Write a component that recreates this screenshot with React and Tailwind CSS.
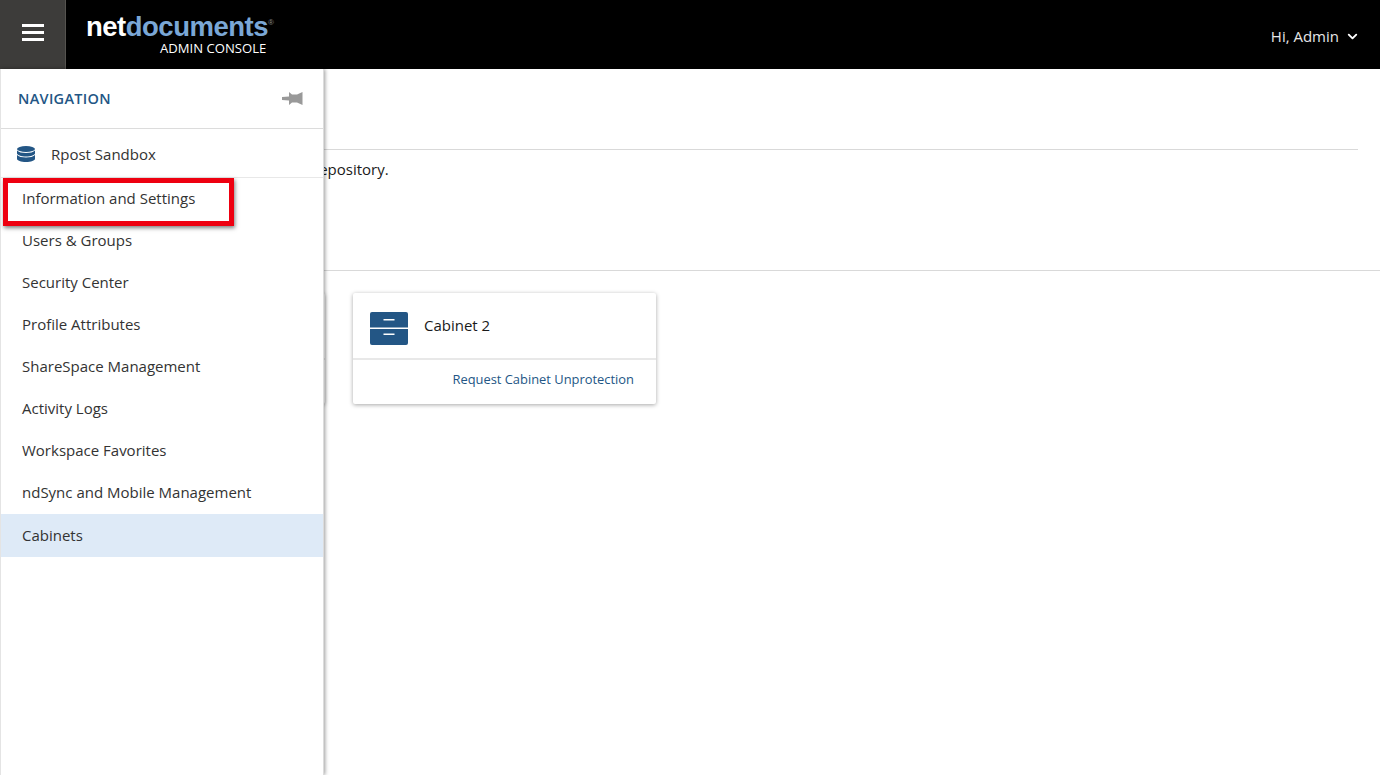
import React from "react";
import { ChevronDown } from "lucide-react";

const NAV_ITEMS = [
  "Information and Settings",
  "Users & Groups",
  "Security Center",
  "Profile Attributes",
  "ShareSpace Management",
  "Activity Logs",
  "Workspace Favorites",
  "ndSync and Mobile Management",
];

function CabinetIcon() {
  return (
    <svg width="38" height="33" viewBox="0 0 38 33" className="shrink-0 mt-[6px]">
      <path d="M2 0h34a2 2 0 0 1 2 2v13.500H0V2a2 2 0 0 1 2-2z" fill="#235685" />
      <path d="M0 17h38v14a2 2 0 0 1-2 2H2a2 2 0 0 1-2-2z" fill="#235685" />
      <rect x="13.500" y="7" width="11" height="1.500" fill="#fff" />
      <rect x="13.500" y="21.500" width="11" height="1.500" fill="#fff" />
    </svg>
  );
}

function DatabaseIcon() {
  return (
    <svg width="18" height="16" viewBox="0 0 18 16" className="shrink-0">
      <ellipse cx="9" cy="3" rx="9" ry="3" fill="#235685" />
      <path d="M0 4.500C1.500 6.200 5 7 9 7s7.500-.8 9-2.500V7.500C18 9 14 10.500 9 10.500S0 9 0 7.500z" fill="#235685" />
      <path d="M0 9C1.500 10.700 5 11.500 9 11.500s7.500-.8 9-2.500v4c0 1.500-4 3-9 3s-9-1.500-9-3z" fill="#235685" />
    </svg>
  );
}

function PinIcon() {
  return (
    <svg width="21" height="15" viewBox="0 0 21 15">
      <path d="M0 6l7-.5V1l3 2.500h5L20.500 1v13L15 11.500h-5L7 14V9.500L0 9z" fill="#999" />
    </svg>
  );
}

function Card({ title, action }) {
  return (
    <div className="w-[303px] h-[111px] bg-white shadow-[0_1px_4px_rgba(0,0,0,0.35)] rounded-[2px] flex flex-col">
      <div className="h-[67px] border-b-2 border-[#e8e8e8] flex items-center pl-[17px] gap-[16px]">
        {title && <CabinetIcon />}
        <span className="text-[15px] text-[#1a1a1a]">{title}</span>
      </div>
      <div className="flex-1 flex items-center justify-end pr-[22px] pb-[4px] text-[12.900px] text-[#235685]">
        {action}
      </div>
    </div>
  );
}

export default function App() {
  return (
    <div className="w-[1380px] h-[775px] overflow-hidden bg-white relative font-['Open_Sans',sans-serif]">
      {/* Header */}
      <header className="h-[69px] bg-black flex items-center">
        <div className="w-[66px] h-full bg-[#3d3c3a] border-r border-[#55534f] flex flex-col items-center justify-center gap-[4px] pb-[4px]">
          <div className="w-[22px] h-[3px] bg-white" />
          <div className="w-[22px] h-[3px] bg-white" />
          <div className="w-[22px] h-[3px] bg-white" />
        </div>
        <div className="ml-[20px] relative w-[190px] h-full">
          <div className="absolute left-0 top-[13px] flex items-start text-[27.500px] leading-[27px] tracking-[-0.5px] whitespace-nowrap font-['Liberation_Sans',sans-serif]">
            <span className="text-white font-bold">net</span>
            <span className="text-[#7aa7d6] font-bold">documents</span>
            <span className="text-[#8a8a8a] text-[8px] leading-[14px] mt-[3px]">®</span>
          </div>
          <div className="absolute left-[74px] top-[40px] text-white text-[13.100px] leading-[17px] whitespace-nowrap">
            ADMIN CONSOLE
          </div>
        </div>
        <div className="ml-auto pr-[20px] pt-[3px] flex items-center gap-[6px] text-[#e6e6e6] text-[15px]">
          <span>Hi, Admin</span>
          <ChevronDown size={15} strokeWidth={3} className="text-white" />
        </div>
      </header>

      {/* Page content, mostly under the nav panel */}
      <main className="flex flex-col">
        <div className="ml-[22px] mr-[22px] mt-[52px] h-[29px] border-b border-[#d9d9d9]" />
        <p className="pl-[313px] mt-[8px] text-[15px] leading-[22px] text-[#1a1a1a] h-[112px]">
          repository.
        </p>
        <div className="border-t border-[#d9d9d9] pt-[22px] pl-[22px] flex gap-[28px]">
          <Card />
          <Card title="Cabinet 2" action="Request Cabinet Unprotection" />
        </div>
      </main>

      {/* Nav panel overlay */}
      <aside className="absolute left-0 top-[69px] bottom-0 w-[324px] bg-white border-l border-r border-l-[#e4e4e4] border-r-[#dcdcdc] shadow-[1px_0_4px_rgba(0,0,0,0.4)] flex flex-col">
        <div className="h-[60px] border-b border-[#dcdcdc] flex items-center justify-between pl-[17px] pr-[20px]">
          <span className="text-[14.500px] font-semibold text-[#235685] tracking-[0.3px]">NAVIGATION</span>
          <PinIcon />
        </div>
        <div className="h-[49px] border-b border-[#e8e8e8] flex items-center pl-[16px] pt-[2px] gap-[16px] text-[15px] text-[#333]">
          <DatabaseIcon />
          <span>Rpost Sandbox</span>
        </div>
        {NAV_ITEMS.map((item) => (
          <div key={item} className="h-[42px] flex items-center pl-[21px] pb-[2px] text-[15px] text-[#333]">
            {item}
          </div>
        ))}
        <div className="h-[43px] flex items-center pl-[21px] text-[15px] text-[#333] bg-[#deeaf7]">
          Cabinets
        </div>
      </aside>

      {/* Red annotation box */}
      <div className="absolute left-[3px] top-[178px] w-[231px] h-[48px] border-[5px] border-[#ee0010] shadow-[1px_2px_4px_rgba(0,0,0,0.5)]" />
    </div>
  );
}
